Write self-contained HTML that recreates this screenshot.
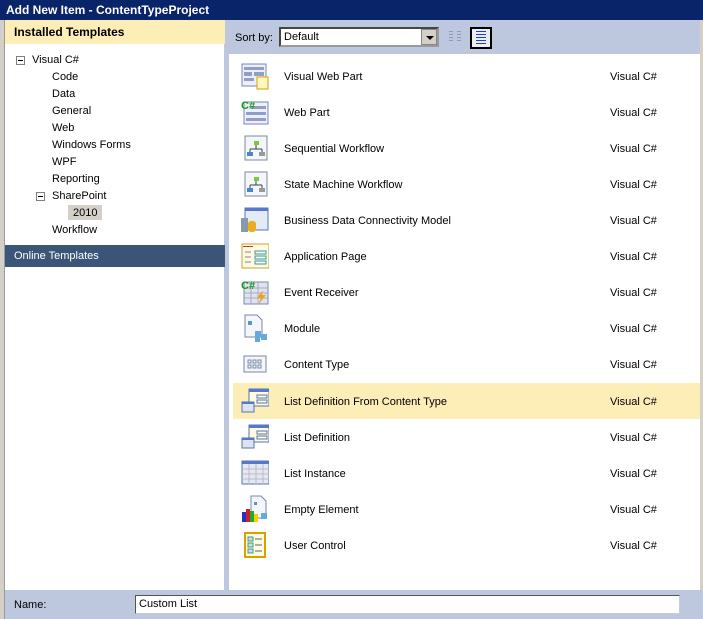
<!DOCTYPE html>
<html><head><meta charset="utf-8"><style>
*{margin:0;padding:0;box-sizing:border-box}
body{width:703px;height:619px;overflow:hidden;background:#bdc8de;font-family:"Liberation Sans",sans-serif;font-size:11px;color:#000;position:relative}
.a{position:absolute}
#title{left:0;top:0;width:703px;height:20px;background:#0a246a;color:#fff;font-weight:bold;font-size:12px;padding:3px 0 0 6px}
#lstrip{left:0;top:20px;width:5px;height:599px;background:#d4d0c8;border-right:1px solid #9a9a9a}
#left{left:5px;top:20px;width:221px;height:570px;background:#fff;border-right:2px solid #bdc8de}
#ihead{left:5px;top:20px;width:220px;height:24px;background:#fdedb7;font-weight:bold;font-size:12px;padding:5px 0 0 9px}
.t{position:absolute;white-space:nowrap}
.box{position:absolute;width:9px;height:9px;border:1px solid #808080;background:#fff}
.box:after{content:"";position:absolute;left:1px;top:3px;width:5px;height:1px;background:#000}
#online{left:5px;top:245px;width:220px;height:22px;background:#3b5578;color:#fff;padding:5px 0 0 9px}
#content{left:229px;top:54px;width:471px;height:536px;background:#fff}
#rb{left:700px;top:20px;width:3px;height:570px;background:#d4d0c8}
.row{position:absolute;left:233px;width:467px;height:36px}
.row .n{position:absolute;left:51px;top:13px}
.row .v{position:absolute;left:377px;top:13px}
.ic{position:absolute;left:8px;top:4px;width:28px;height:28px}
#sel{background:#fdedb7}
#sort{left:235px;top:32px}
#combo{left:279px;top:27px;width:160px;height:20px;background:#fff;border:2px inset #999;padding:2px 0 0 3px}
#btn{left:421px;top:29px;width:16px;height:16px;background:#d4d0c8;border:1px solid #888}
#btn:after{content:"";position:absolute;left:4px;top:6px;border:4px solid transparent;border-top:4px solid #000;border-bottom:none}
#name{left:14px;top:599px}
#nbox{left:135px;top:595px;width:545px;height:19px;background:#fff;border:1px solid #555;border-right-color:#ccc;border-bottom-color:#ccc;padding:2px 0 0 3px}
</style></head><body>
<div id="title" class="a">Add New Item - ContentTypeProject</div>
<div id="lstrip" class="a"></div>
<div id="left" class="a"></div>
<div id="ihead" class="a">Installed Templates</div>
<div class="box" style="left:16px;top:56px"></div>
<div class="t" style="left:32px;top:54px">Visual C#</div>
<div class="t" style="left:52px;top:71px">Code</div>
<div class="t" style="left:52px;top:88px">Data</div>
<div class="t" style="left:52px;top:105px">General</div>
<div class="t" style="left:52px;top:122px">Web</div>
<div class="t" style="left:52px;top:139px">Windows Forms</div>
<div class="t" style="left:52px;top:156px">WPF</div>
<div class="t" style="left:52px;top:173px">Reporting</div>
<div class="box" style="left:36px;top:192px"></div>
<div class="t" style="left:52px;top:190px">SharePoint</div>
<div class="t" style="left:68px;top:205px;background:#d4d0c8;padding:2px 5px 1px 5px">2010</div>
<div class="t" style="left:52px;top:224px">Workflow</div>
<div id="online" class="a">Online Templates</div>
<div id="sort" class="a">Sort by:</div>
<div id="combo" class="a">Default</div>
<div id="btn" class="a"></div>
<svg class="a" style="left:447px;top:28px" width="18" height="18"><g fill="#8a9ac0"><rect x="2" y="3" width="4" height="1"/><rect x="2" y="6" width="4" height="1"/><rect x="2" y="9" width="4" height="1"/><rect x="2" y="12" width="4" height="1"/><rect x="10" y="3" width="4" height="1"/><rect x="10" y="6" width="4" height="1"/><rect x="10" y="9" width="4" height="1"/><rect x="10" y="12" width="4" height="1"/></g></svg>
<div class="a" style="left:470px;top:27px;width:22px;height:22px;border:2px solid #000;background:#e8ecf4"><svg width="18" height="18"><g fill="#2040c0"><rect x="4" y="2" width="10" height="1"/><rect x="4" y="5" width="10" height="1"/><rect x="4" y="8" width="10" height="1"/><rect x="4" y="11" width="10" height="1"/><rect x="4" y="14" width="10" height="1"/></g></svg></div>
<div id="content" class="a"></div>
<div id="rb" class="a"></div>

<div class="row" style="top:58px"><svg class="ic" viewBox="0 0 28 28"><rect x="1" y="2" width="24" height="22" fill="#eef" stroke="#7788aa"/><rect x="3" y="5" width="20" height="3" fill="#8fa0c8"/><rect x="3" y="10" width="8" height="4" fill="#8fa0c8"/><rect x="13" y="10" width="10" height="4" fill="#8fa0c8"/><rect x="3" y="16" width="10" height="3" fill="#8fa0c8"/><rect x="16" y="15" width="11" height="12" fill="#fff7c0" stroke="#d9a000"/></svg><span class="n">Visual Web Part</span><span class="v">Visual C#</span></div>
<div class="row" style="top:94px"><svg class="ic" viewBox="0 0 28 28"><rect x="3" y="4" width="24" height="22" fill="#eef" stroke="#7788aa"/><rect x="10" y="8" width="15" height="3" fill="#8fa0c8"/><rect x="5" y="14" width="20" height="3" fill="#8fa0c8"/><rect x="5" y="20" width="20" height="3" fill="#8fa0c8"/><text x="0" y="11" font-size="11" font-weight="bold" fill="#1a9a1a" font-family="Liberation Sans">C#</text></svg><span class="n">Web Part</span><span class="v">Visual C#</span></div>
<div class="row" style="top:130px"><svg class="ic" viewBox="0 0 28 28"><rect x="4" y="2" width="22" height="24" fill="#f4f6fa" stroke="#7788aa"/><rect x="13" y="7" width="5" height="4" fill="#7c3"/><path d="M15 11v4M9 15h12M9 15v3M21 15v3" stroke="#345" fill="none"/><rect x="6" y="18" width="6" height="4" fill="#48c"/><rect x="18" y="18" width="6" height="4" fill="#999"/></svg><span class="n">Sequential Workflow</span><span class="v">Visual C#</span></div>
<div class="row" style="top:166px"><svg class="ic" viewBox="0 0 28 28"><rect x="4" y="2" width="22" height="24" fill="#f4f6fa" stroke="#7788aa"/><rect x="13" y="7" width="5" height="4" fill="#7c3"/><path d="M15 11v4M9 15h12M9 15v3M21 15v3" stroke="#345" fill="none"/><rect x="6" y="18" width="6" height="4" fill="#48c"/><rect x="18" y="18" width="6" height="4" fill="#999"/></svg><span class="n">State Machine Workflow</span><span class="v">Visual C#</span></div>
<div class="row" style="top:202px"><svg class="ic" viewBox="0 0 28 28"><rect x="4" y="2" width="23" height="22" fill="#e4eaf6" stroke="#5577aa"/><rect x="4" y="2" width="23" height="3" fill="#5577cc"/><rect x="0" y="12" width="7" height="14" fill="#8899aa"/><rect x="7" y="15" width="8" height="11" rx="3" fill="#e8b020"/></svg><span class="n">Business Data Connectivity Model</span><span class="v">Visual C#</span></div>
<div class="row" style="top:238px"><svg class="ic" viewBox="0 0 28 28"><rect x="1" y="2" width="27" height="24" fill="#fffbe0" stroke="#c9a030"/><rect x="2" y="4" width="10" height="1" fill="#c33"/><path d="M4 10h6M4 15h6M4 20h6" stroke="#789"/><rect x="14" y="9" width="11" height="3" fill="none" stroke="#39a"/><rect x="14" y="14" width="11" height="3" fill="none" stroke="#39a"/><rect x="14" y="19" width="11" height="3" fill="none" stroke="#39a"/></svg><span class="n">Application Page</span><span class="v">Visual C#</span></div>
<div class="row" style="top:274px"><svg class="ic" viewBox="0 0 28 28"><rect x="3" y="4" width="24" height="22" fill="#dde4f0" stroke="#7788aa"/><path d="M3 10h24M3 15h24M3 20h24M10 4v22M17 4v22" stroke="#aab"/><path d="M22 12l-6 8h4l-3 7 8-10h-4z" fill="#f0a020"/><text x="0" y="11" font-size="11" font-weight="bold" fill="#1a9a1a" font-family="Liberation Sans">C#</text></svg><span class="n">Event Receiver</span><span class="v">Visual C#</span></div>
<div class="row" style="top:310px"><svg class="ic" viewBox="0 0 28 28"><path d="M4 1h12l5 5v17H4z" fill="#f4f6fa" stroke="#7788aa"/><rect x="7" y="7" width="4" height="4" fill="#59c"/><rect x="14" y="17" width="6" height="6" fill="#6ad"/><rect x="20" y="20" width="6" height="6" fill="#6ad"/><rect x="14" y="23" width="5" height="5" fill="#6ad"/></svg><span class="n">Module</span><span class="v">Visual C#</span></div>
<div class="row" style="top:346px"><svg class="ic" viewBox="0 0 28 28"><rect x="3" y="6" width="22" height="16" fill="#f4f6fa" stroke="#7788aa"/><path d="M7 10h3v3H7zM12 10h3v3h-3zM17 10h3v3h-3zM7 15h3v3H7zM12 15h3v3h-3zM17 15h3v3h-3z" fill="none" stroke="#7788aa"/></svg><span class="n">Content Type</span><span class="v">Visual C#</span></div>
<div class="row" id="sel" style="top:383px"><svg class="ic" viewBox="0 0 28 28"><rect x="8" y="2" width="20" height="17" fill="#fffbe0" stroke="#5577aa"/><rect x="8" y="2" width="20" height="3" fill="#5577cc"/><rect x="16" y="8" width="10" height="3" fill="none" stroke="#5577aa"/><rect x="16" y="13" width="10" height="3" fill="none" stroke="#5577aa"/><rect x="1" y="15" width="12" height="10" fill="#dde4f0" stroke="#5577aa"/><rect x="1" y="15" width="12" height="2" fill="#5577cc"/></svg><span class="n">List Definition From Content Type</span><span class="v">Visual C#</span></div>
<div class="row" style="top:419px"><svg class="ic" viewBox="0 0 28 28"><rect x="8" y="2" width="20" height="17" fill="#fffbe0" stroke="#5577aa"/><rect x="8" y="2" width="20" height="3" fill="#5577cc"/><rect x="16" y="8" width="10" height="3" fill="none" stroke="#5577aa"/><rect x="16" y="13" width="10" height="3" fill="none" stroke="#5577aa"/><rect x="1" y="15" width="12" height="10" fill="#dde4f0" stroke="#5577aa"/><rect x="1" y="15" width="12" height="2" fill="#5577cc"/></svg><span class="n">List Definition</span><span class="v">Visual C#</span></div>
<div class="row" style="top:455px"><svg class="ic" viewBox="0 0 28 28"><rect x="1" y="2" width="27" height="23" fill="#e4e8f0" stroke="#5577aa"/><rect x="1" y="2" width="27" height="3" fill="#5577cc"/><path d="M1 10h27M1 15h27M1 20h27M8 5v20M15 5v20M22 5v20" stroke="#bbc"/></svg><span class="n">List Instance</span><span class="v">Visual C#</span></div>
<div class="row" style="top:491px"><svg class="ic" viewBox="0 0 28 28"><path d="M10 1h10l5 5v17H10z" fill="#f4f6fa" stroke="#7788aa"/><rect x="13" y="7" width="3" height="3" fill="#59c"/><rect x="20" y="18" width="6" height="6" fill="#6ad"/><rect x="1" y="17" width="4" height="10" fill="#23c"/><rect x="5" y="14" width="4" height="13" fill="#c22"/><rect x="9" y="16" width="4" height="11" fill="#2a3"/><rect x="13" y="19" width="4" height="8" fill="#fc0"/></svg><span class="n">Empty Element</span><span class="v">Visual C#</span></div>
<div class="row" style="top:527px"><svg class="ic" viewBox="0 0 28 28"><rect x="4" y="2" width="20" height="24" fill="#fffbe0" stroke="#d9a000" stroke-width="2"/><rect x="7" y="6" width="5" height="4" fill="#cde" stroke="#497"/><rect x="7" y="12" width="5" height="4" fill="#cde" stroke="#497"/><rect x="7" y="18" width="5" height="4" fill="#cde" stroke="#497"/><path d="M14 8h7M14 14h7M14 20h7" stroke="#567"/></svg><span class="n">User Control</span><span class="v">Visual C#</span></div>

<div id="name" class="a">Name:</div>
<div id="nbox" class="a">Custom List</div>
</body></html>
